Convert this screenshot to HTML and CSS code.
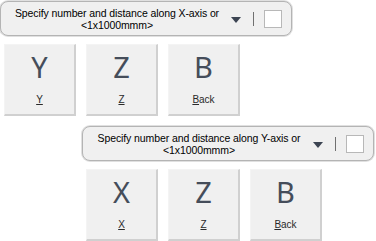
FILE: index.html
```html
<!DOCTYPE html>
<html>
<head>
<meta charset="utf-8">
<link rel="stylesheet" href="styles.css">
</head>
<body>
<div class="page">
  <div class="group g1">
    <div class="prompt">
      <div class="prompt-text">Specify number and distance along X-axis or<br>&lt;1x1000mmm&gt;</div>
      <div class="arrow"></div>
      <div class="sep"></div>
      <div class="check"></div>
    </div>
    <div class="buttons">
      <div class="btn"><div class="big">Y</div><div class="label"><u>Y</u></div></div>
      <div class="btn"><div class="big">Z</div><div class="label"><u>Z</u></div></div>
      <div class="btn"><div class="big">B</div><div class="label"><u>B</u>ack</div></div>
    </div>
  </div>
  <div class="group g2">
    <div class="prompt">
      <div class="prompt-text">Specify number and distance along Y-axis or<br>&lt;1x1000mmm&gt;</div>
      <div class="arrow"></div>
      <div class="sep"></div>
      <div class="check"></div>
    </div>
    <div class="buttons">
      <div class="btn"><div class="big">X</div><div class="label"><u>X</u></div></div>
      <div class="btn"><div class="big">Z</div><div class="label"><u>Z</u></div></div>
      <div class="btn"><div class="big">B</div><div class="label"><u>B</u>ack</div></div>
    </div>
  </div>
</div>
</body>
</html>
```
FILE: styles.css
```css
html, body {
  margin: 0;
  padding: 0;
  background: #ffffff;
}
.page {
  width: 376px;
  height: 241px;
  overflow: hidden;
  padding-top: 1px;
  box-sizing: border-box;
  font-family: "Liberation Sans", Arial, sans-serif;
}
.group {
  display: flex;
  flex-direction: column;
  width: 292px;
}
.g2 {
  margin-left: 82px;
  margin-top: 10px;
}
.prompt {
  height: 35px;
  box-sizing: border-box;
  border: 1px solid #b4b4b4;
  box-shadow: 0 0 0 1px #e0e0e0;
  border-radius: 8px;
  background: #f0f0f0;
  display: flex;
  align-items: center;
  padding: 0 9px 0 6px;
}
.prompt-text {
  flex: 1;
  text-align: center;
  font-size: 10.5px;
  line-height: 12px;
  color: #000;
  letter-spacing: -0.1px;
}
.arrow {
  width: 0;
  height: 0;
  border-left: 5px solid transparent;
  border-right: 5px solid transparent;
  border-top: 6px solid #3c4452;
  margin: 2px 0 0 4px;
}
.sep {
  width: 1px;
  height: 14px;
  background: #707070;
  margin-left: 12px;
}
.check {
  width: 18px;
  height: 18px;
  box-sizing: border-box;
  background: #fff;
  border: 1px solid #b8b8b8;
  margin-left: 10px;
}
.buttons {
  display: flex;
  gap: 10px;
  margin-top: 8px;
  margin-left: 4px;
}
.btn {
  width: 72px;
  height: 72px;
  box-sizing: border-box;
  background: #f0f0f0;
  border-top: 1px solid #f4f4f4;
  border-left: 1px solid #f4f4f4;
  border-right: 2px solid #d0d0d0;
  border-bottom: 2px solid #d0d0d0;
  display: flex;
  flex-direction: column;
  align-items: center;
}
.big {
  font-family: "Noto Sans", "Liberation Sans", sans-serif;
  font-size: 29px;
  line-height: 30px;
  margin-top: 7px;
  color: #454d5a;
}
.label {
  font-size: 10px;
  line-height: 12px;
  margin-top: 12px;
  color: #2a2a2a;
}
.label u {
  text-underline-offset: 1px;
}
```
